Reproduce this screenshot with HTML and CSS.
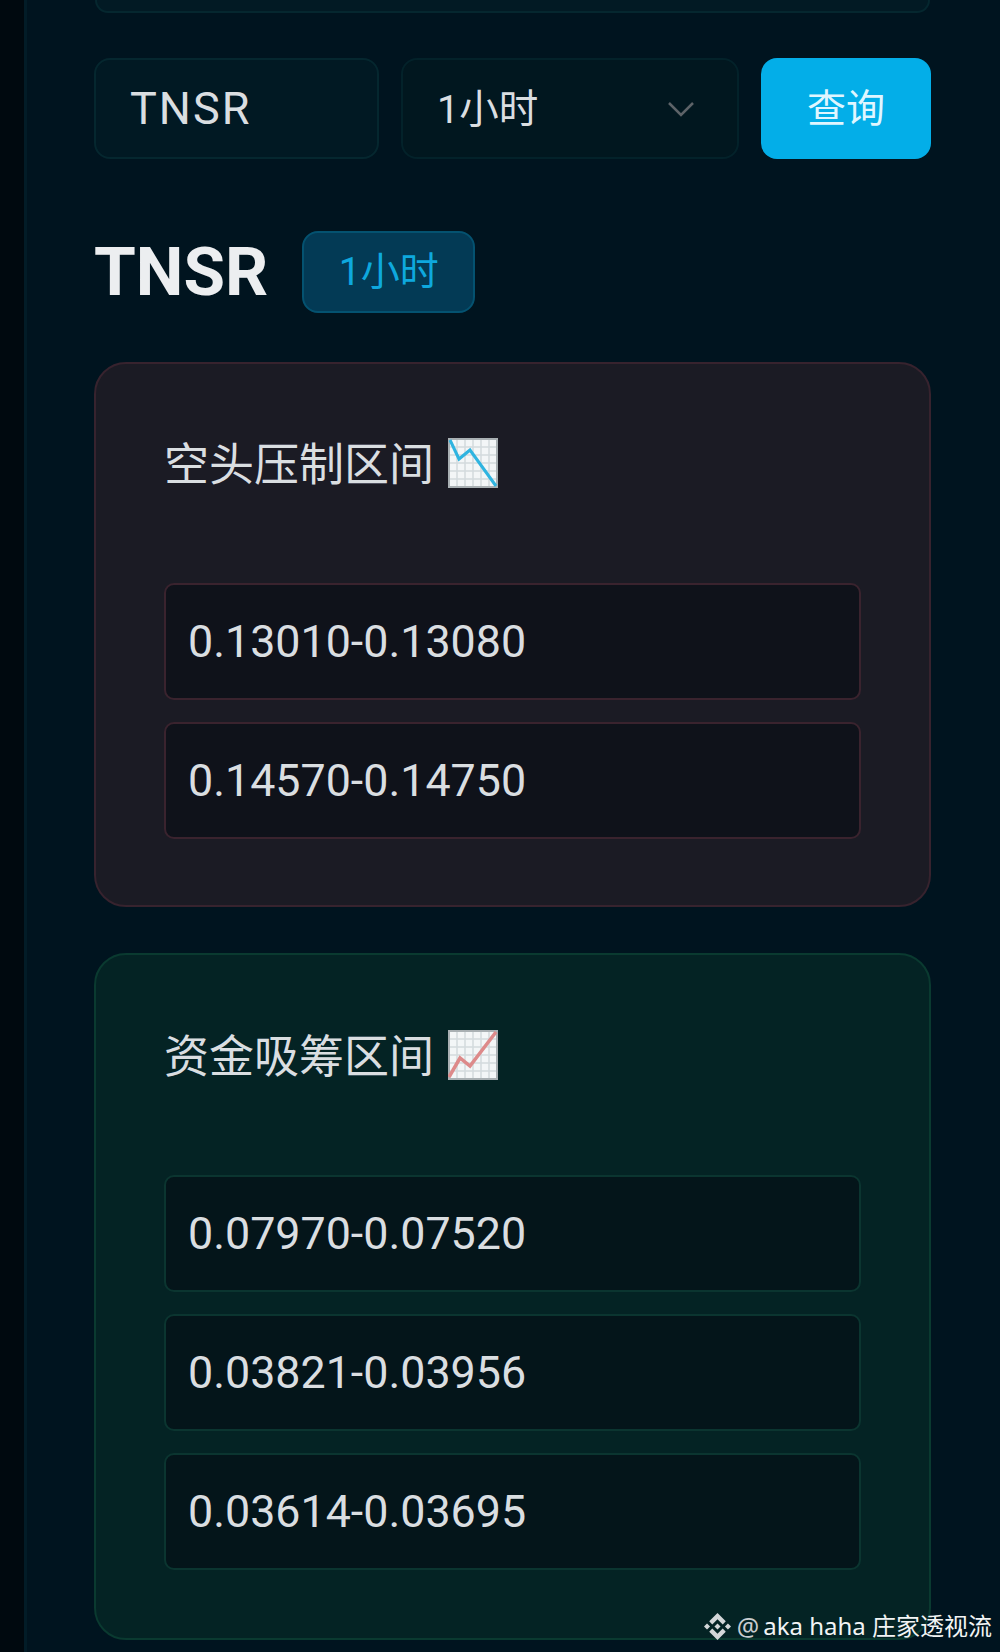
FILE: index.html
```html
<!DOCTYPE html>
<html lang="zh">
<head>
  <meta charset="UTF-8">
  <meta name="viewport" content="width=device-width, initial-scale=1">
  <title>TNSR 1小时</title>
  <link rel="stylesheet" href="styles.css">
</head>
<body>

<div class="page">
  <div class="rail"></div>

  <div class="main">
    <div class="top-card"></div>

    <div class="query-row">
      <div class="field field-symbol">TNSR</div>
      <div class="field field-select">
        <span class="select-text">1小时</span>
        <svg class="chevron" viewBox="0 0 28 18" width="28" height="18">
          <path d="M2 3 L14 15 L26 3" fill="none" stroke="#5d6368" stroke-width="2.5"/>
        </svg>
      </div>
      <div class="query-btn">查询</div>
    </div>

    <div class="title-row">
      <h1>TNSR</h1>
      <span class="badge">1小时</span>
    </div>

    <div class="zone zone-red">
      <div class="zone-title">
        <span class="zone-name">空头压制区间</span>
        <svg class="emoji" viewBox="0 0 50 50" width="50" height="50">
          <rect x="1" y="1" width="48" height="48" fill="#f3f6f7" stroke="#a9b0b3" stroke-width="2"/>
          <path d="M9 2V48M17 2V48M25 2V48M33 2V48M41 2V48M2 9H48M2 17H48M2 25H48M2 33H48M2 41H48" stroke="#d3dadd" stroke-width="1.5"/>
          <path d="M2 2 L11 21 L22 12 L48 48" fill="none" stroke="#2fb4e0" stroke-width="3"/>
        </svg>
      </div>
      <div class="price">0.13010-0.13080</div>
      <div class="price">0.14570-0.14750</div>
    </div>

    <div class="zone zone-green">
      <div class="zone-title">
        <span class="zone-name">资金吸筹区间</span>
        <svg class="emoji" viewBox="0 0 50 50" width="50" height="50">
          <rect x="1" y="1" width="48" height="48" fill="#f3f6f7" stroke="#a9b0b3" stroke-width="2"/>
          <path d="M9 2V48M17 2V48M25 2V48M33 2V48M41 2V48M2 9H48M2 17H48M2 25H48M2 33H48M2 41H48" stroke="#d3dadd" stroke-width="1.5"/>
          <path d="M1 47 L12 28 L22 36 L48 2" fill="none" stroke="#dd8a8a" stroke-width="3.5"/>
        </svg>
      </div>
      <div class="price">0.07970-0.07520</div>
      <div class="price">0.03821-0.03956</div>
      <div class="price">0.03614-0.03695</div>
    </div>
  </div>
</div>

<div class="watermark">
  <svg class="wm-logo" viewBox="0 0 32 32" width="27" height="27">
    <path d="M9.8 13.5 L16 7.3 L22.2 13.5 L25.8 9.9 L16 0 L6.2 9.9Z"/>
    <path d="M9.8 18.5 L16 24.7 L22.2 18.5 L25.8 22.1 L16 32 L6.2 22.1Z"/>
    <path d="M0 16 L3.6 12.4 L7.2 16 L3.6 19.6Z"/>
    <path d="M24.8 16 L28.4 12.4 L32 16 L28.4 19.6Z"/>
    <path d="M12.4 16 L16 12.4 L19.6 16 L16 19.6Z"/>
  </svg>
  <span class="wm-at">@</span>
  <span>aka haha 庄家透视流</span>
</div>

</body>
</html>
```

FILE: styles.css
```css
html, body {
  margin: 0;
  height: 1652px;
  overflow: hidden;
}
body {
  font-family: Roboto, "Noto Sans CJK SC", sans-serif;
  background-color: #00141f;
  color: #dadee1;
  position: relative;
}
.page {
  display: flex;
  height: 1652px;
}
.rail {
  width: 24px;
  background-color: #00090f;
  border-right: 3px solid #021c27;
}
.main {
  flex: 1;
  padding: 0 69px 0 67px;
}
.top-card {
  height: 13px;
  margin: 0 1px;
  background-color: #021a24;
  border: 2px solid #05272f;
  border-top: none;
  border-radius: 0 0 24px 24px;
  box-sizing: border-box;
}
.query-row {
  display: flex;
  gap: 22px;
  margin-top: 45px;
  height: 101px;
}
.field {
  display: flex;
  align-items: center;
  box-sizing: border-box;
  background-color: #011923;
  border: 2px solid #05272f;
  border-radius: 16px;
  padding: 0 34px;
}
.field-symbol {
  width: 285px;
  font-size: 45px;
  letter-spacing: 2px;
}
.field-select {
  width: 338px;
  background-color: #01171f;
  border-color: #03222a;
  justify-content: space-between;
  font-size: 39.5px;
}
.select-text {
  padding-bottom: 7px;
}
.chevron {
  margin-right: 8px;
}
.query-btn {
  flex: 1;
  display: flex;
  align-items: center;
  justify-content: center;
  padding-bottom: 7px;
  background-color: #03aee8;
  border-radius: 16px;
  color: #dff6ff;
  font-size: 39px;
}
.title-row {
  display: flex;
  align-items: center;
  gap: 34px;
  margin-top: 72px;
  height: 82px;
}
h1 {
  margin: 0;
  padding-bottom: 2px;
  font-size: 67.5px;
  font-weight: 700;
  color: #eceef0;
}
.badge {
  display: flex;
  align-items: center;
  justify-content: center;
  box-sizing: border-box;
  width: 173px;
  height: 82px;
  padding-bottom: 8px;
  background-color: #033a55;
  border: 2px solid #045270;
  border-radius: 16px;
  color: #0ea8de;
  font-size: 39px;
}
.zone {
  box-sizing: border-box;
  margin-top: 49px;
  padding: 68px 68px 66px;
  border: 2px solid;
  border-radius: 32px;
}
.zone-red {
  background-color: #1b1b24;
  border-color: #37232e;
}
.zone-green {
  margin-top: 46px;
  padding-top: 69px;
  padding-bottom: 68px;
  background-color: #042324;
  border-color: #0a3a30;
}
.zone-title {
  display: flex;
  align-items: center;
  gap: 14px;
  height: 62px;
  margin-bottom: 89px;
  font-size: 45px;
}
.zone-name {
  padding-bottom: 4px;
}
.price {
  box-sizing: border-box;
  display: flex;
  align-items: center;
  height: 117px;
  padding: 0 22px;
  font-size: 44.8px;
  border: 2px solid;
  border-radius: 10px;
}
.price + .price {
  margin-top: 22px;
}
.zone-red .price {
  background-color: #0f121a;
  border-color: #3a232e;
}
.zone-green .price {
  background-color: #04151a;
  border-color: #0b3530;
}
/* platform mark stamped over the bottom corner */
.watermark {
  position: absolute;
  right: 8px;
  bottom: 9px;
  display: flex;
  align-items: center;
  gap: 6px;
  font-family: "Noto Sans", "Noto Sans CJK SC", sans-serif;
  font-size: 24px;
  line-height: 34px;
  color: #f2f4f5;
}
.wm-logo {
  fill: #d3d6d8;
}
.wm-at {
  margin-right: -2px;
  color: #c9cdd0;
  font-size: 25px;
}
```
